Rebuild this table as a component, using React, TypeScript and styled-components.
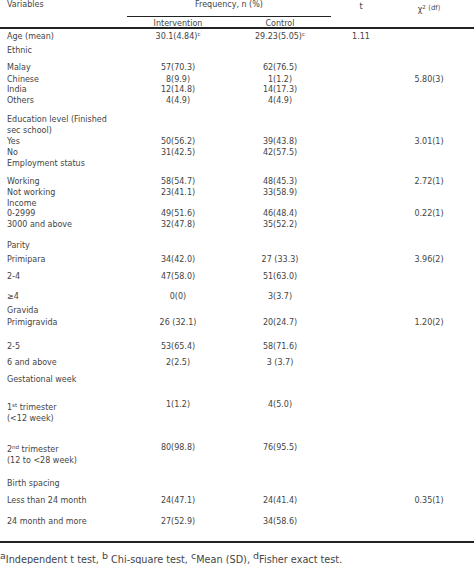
import React from 'react';
import styled, { createGlobalStyle } from 'styled-components';

const GlobalStyle = createGlobalStyle`
  html, body {
    margin: 0;
    padding: 0;
    background: #fff;
  }
  body {
    font-family: "DejaVu Sans", Verdana, sans-serif;
    color: #444;
    overflow: hidden;
  }
`;

const COLUMNS = '127px 102px 102px 60px 76px';

const Page = styled.div`
  width: 474px;
  height: 564px;
  font-size: 8px;
`;

const Header = styled.div`
  display: grid;
  grid-template-columns: ${COLUMNS};
  grid-template-rows: 17px 10px;
  border-bottom: 2px solid #222;
`;

const HeadCell = styled.div<{ $shift?: number; $align?: string }>`
  line-height: 10px;
  margin-top: ${({ $shift }) => $shift ?? 0}px;
  text-align: ${({ $align }) => $align ?? 'center'};
  white-space: nowrap;
`;

const HeadLabel = styled(HeadCell)`
  padding-left: 7px;
`;

const FrequencyHead = styled(HeadCell)`
  grid-column: 2 / 4;
  box-sizing: border-box;
  border-bottom: 1px solid #222;
`;

const SubHead = styled.div<{ $col: number }>`
  grid-row: 2;
  grid-column: ${({ $col }) => $col};
  line-height: 10px;
  padding-top: 1.5px;
  text-align: center;
`;

const Df = styled.span`
  font-size: 6.8px;
  position: relative;
  top: -2px;
`;

const Body = styled.div`
  display: flex;
  flex-direction: column;
  padding-top: 1.5px;
`;

const Row = styled.div<{ $gap: number }>`
  display: grid;
  grid-template-columns: ${COLUMNS};
  margin-top: ${({ $gap }) => $gap}px;
  line-height: 10.5px;
`;

const Label = styled.div`
  padding-left: 7px;
  white-space: nowrap;
`;

const Value = styled.div<{ $shift?: number }>`
  text-align: center;
  white-space: nowrap;
  margin-top: ${({ $shift }) => $shift ?? 0}px;
`;

const Sup = styled.sup`
  font-size: 5.5px;
  vertical-align: 3px;
  line-height: 0;
`;

const Footer = styled.div`
  margin-top: 13.5px;
  border-top: 2px solid #222;
  padding-top: 11px;
  font-size: 9.7px;
  line-height: 12px;
  white-space: nowrap;
`;

const NoteMark = styled.sup`
  font-size: 9.5px;
  vertical-align: 4px;
  line-height: 0;
`;

type RowData = {
  label: React.ReactNode;
  iv?: React.ReactNode;
  ctrl?: React.ReactNode;
  t?: string;
  chi?: string;
  gap: number;
  shift?: number;
};

const rows: RowData[] = [
  { label: 'Age (mean)', iv: <>30.1(4.84)<Sup>c</Sup></>, ctrl: <>29.23(5.05)<Sup>c</Sup></>, t: '1.11', gap: 1 },
  { label: 'Ethnic', gap: 4.25 },
  { label: 'Malay', iv: '57(70.3)', ctrl: '62(76.5)', gap: 6.5 },
  { label: 'Chinese', iv: '8(9.9)', ctrl: '1(1.2)', chi: '5.80(3)', gap: 1 },
  { label: 'India', iv: '12(14.8)', ctrl: '14(17.3)', gap: 0 },
  { label: 'Others', iv: '4(4.9)', ctrl: '4(4.9)', gap: 0.5 },
  { label: <>Education level (Finished<br />sec school)</>, gap: 8.5 },
  { label: 'Yes', iv: '50(56.2)', ctrl: '39(43.8)', chi: '3.01(1)', gap: 1 },
  { label: 'No', iv: '31(42.5)', ctrl: '42(57.5)', gap: 0.5 },
  { label: 'Employment status', gap: 0.5 },
  { label: 'Working', iv: '58(54.7)', ctrl: '48(45.3)', chi: '2.72(1)', gap: 7.5 },
  { label: 'Not working', iv: '23(41.1)', ctrl: '33(58.9)', gap: 0.5 },
  { label: 'Income', gap: 0 },
  { label: '0-2999', iv: '49(51.6)', ctrl: '46(48.4)', chi: '0.22(1)', gap: 0 },
  { label: '3000 and above', iv: '32(47.8)', ctrl: '35(52.2)', gap: 0 },
  { label: 'Parity', gap: 11 },
  { label: 'Primipara', iv: '34(42.0)', ctrl: '27 (33.3)', chi: '3.96(2)', gap: 3.5 },
  { label: '2-4', iv: '47(58.0)', ctrl: '51(63.0)', gap: 6.5 },
  { label: '\u22654', iv: '0(0)', ctrl: '3(3.7)', gap: 9.5 },
  { label: 'Gravida', gap: 3.5 },
  { label: 'Primigravida', iv: '26 (32.1)', ctrl: '20(24.7)', chi: '1.20(2)', gap: 1.5 },
  { label: '2-5', iv: '53(65.4)', ctrl: '58(71.6)', gap: 13.5 },
  { label: '6 and above', iv: '2(2.5)', ctrl: '3 (3.7)', gap: 5.5 },
  { label: 'Gestational week', gap: 6.5 },
  { label: <>1<Sup>st</Sup> trimester<br />(&lt;12 week)</>, iv: '1(1.2)', ctrl: '4(5.0)', gap: 17.5, shift: -3 },
  { label: <>2<Sup>nd</Sup> trimester<br />(12 to &lt;28 week)</>, iv: '80(98.8)', ctrl: '76(95.5)', gap: 21, shift: -2 },
  { label: 'Birth spacing', gap: 13 },
  { label: 'Less than 24 month', iv: '24(47.1)', ctrl: '24(41.4)', chi: '0.35(1)', gap: 6.5 },
  { label: '24 month and more', iv: '27(52.9)', ctrl: '34(58.6)', gap: 10.5 },
];

export default function App() {
  return (
    <Page>
      <GlobalStyle />
      <Header>
        <HeadLabel $shift={-0.5} $align="left">Variables</HeadLabel>
        <FrequencyHead $shift={-0.5}>Frequency, n (%)</FrequencyHead>
        <HeadCell $shift={1.5}>t</HeadCell>
        <HeadCell $shift={5}>
          χ<Sup>2</Sup> <Df>(df)</Df>
        </HeadCell>
        <SubHead $col={2}>Intervention</SubHead>
        <SubHead $col={3}>Control</SubHead>
      </Header>
      <Body>
        {rows.map((r, i) => (
          <Row key={i} $gap={r.gap}>
            <Label>{r.label}</Label>
            <Value $shift={r.shift}>{r.iv}</Value>
            <Value $shift={r.shift}>{r.ctrl}</Value>
            <Value>{r.t}</Value>
            <Value>{r.chi}</Value>
          </Row>
        ))}
      </Body>
      <Footer>
        <NoteMark>a</NoteMark>Independent t test, <NoteMark>b</NoteMark> Chi-square test, <NoteMark>c</NoteMark>Mean (SD),{' '}
        <NoteMark>d</NoteMark>Fisher exact test.
      </Footer>
    </Page>
  );
}
